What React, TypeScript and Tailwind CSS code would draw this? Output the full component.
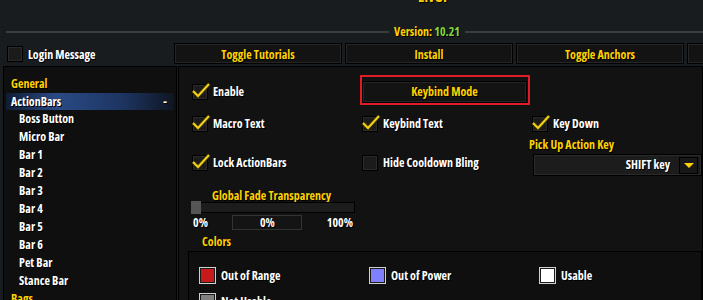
import React from 'react';

const GOLD = 'text-[#ffd100]';

function Check({ checked = false }: { checked?: boolean }) {
  return (
    <div className="relative w-[16px] h-[16px] shrink-0 border border-black bg-[#1b1b1b] shadow-[inset_0_0_0_1px_#2a2a2a]">
      {checked && (
        <svg className="absolute -left-[3px] -top-[4px]" width="22" height="20" viewBox="0 0 22 20">
          <path d="M3 10 L8 15 L19 3" fill="none" stroke="#3a3000" strokeWidth="4" strokeLinejoin="miter" />
          <path d="M3 10 L8 15 L19 3" fill="none" stroke="#f2d21a" strokeWidth="2" strokeLinejoin="miter" />
        </svg>
      )}
    </div>
  );
}

function CheckRow({ label, checked = false }: { label: string; checked?: boolean }) {
  return (
    <div className="flex items-center gap-[5px] w-[170px] shrink-0 whitespace-nowrap">
      <Check checked={checked} />
      <span className="text-white">{label}</span>
    </div>
  );
}

function Btn({ label, className = '' }: { label: string; className?: string }) {
  return (
    <div
      className={`flex items-center justify-center shrink-0 whitespace-nowrap border border-black bg-[#131313] shadow-[inset_0_0_0_1px_#252525] ${GOLD} ${className}`}
    >
      {label}
    </div>
  );
}

function Swatch({ color, label }: { color: string; label: string }) {
  return (
    <div className="flex items-center gap-[5px] w-[170px] shrink-0 whitespace-nowrap">
      <div className="w-[17px] h-[17px] border border-[#d0d0d0] p-px bg-[#1a1a1a]">
        <div className="w-full h-full" style={{ backgroundColor: color }} />
      </div>
      <span className="text-white">{label}</span>
    </div>
  );
}

const subItems = ['Boss Button', 'Micro Bar', 'Bar 1', 'Bar 2', 'Bar 3', 'Bar 4', 'Bar 5', 'Bar 6', 'Pet Bar', 'Stance Bar'];

export default function App() {
  return (
    <div className="flow-root w-[703px] h-[300px] overflow-hidden bg-[#181c1f] text-[12px] font-bold leading-none [font-family:'Open_Sans',sans-serif] [font-stretch:75%] [text-shadow:1px_1px_0_#000]">
      {/* title */}
      <div className="h-[25px] flow-root">
        <div className={`pl-[418px] -mt-[11px] text-[15px] ${GOLD}`}>ElvUI</div>
      </div>

      {/* version line */}
      <div className="flex items-center h-[13px] pl-[6px]">
        <div className="w-[383px] h-[2px] bg-[#3c3c3c]" />
        <div className="px-[5px] whitespace-nowrap">
          <span className={GOLD}>Version: </span>
          <span className="text-[#7fd83a]">10.21</span>
        </div>
        <div className="flex-1 h-[2px] bg-[#3c3c3c]" />
      </div>

      {/* top row */}
      <div className="flex items-center h-[21px] mt-[5px]">
        <div className="w-[174px] shrink-0 pl-[7px] flex items-center gap-[5px] whitespace-nowrap">
          <Check />
          <span className="text-white pt-[2px]">Login Message</span>
        </div>
        <div className="flex gap-[3px]">
          <Btn label="Toggle Tutorials" className="w-[168px] h-[21px] pt-[2px]" />
          <Btn label="Install" className="w-[168px] h-[21px] pt-[2px]" />
          <Btn label="Toggle Anchors" className="w-[168px] h-[21px] pt-[2px]" />
          <Btn label="" className="w-[168px] h-[21px]" />
        </div>
      </div>

      {/* body */}
      <div className="flex mt-[2px] h-[240px]">
        {/* left tree */}
        <div className="ml-[3px] w-[174px] shrink-0 border border-black bg-[#0f0f0f] pt-[11px] whitespace-nowrap">
          <div className={`pl-[7px] h-[15px] ${GOLD}`}>General</div>
          <div className="mx-[2px] h-[17px] flex items-center justify-between pl-[5px] pr-[7px] text-white bg-[linear-gradient(to_right,#0f1c33,#2a4a86_30%,#1d3460_70%,#0f1522)]">
            <span>ActionBars</span>
            <span>-</span>
          </div>
          {subItems.map((s) => (
            <div key={s} className="pl-[15px] h-[18px] flex items-center text-white">
              {s}
            </div>
          ))}
          <div className={`pl-[7px] h-[18px] flex items-center ${GOLD}`}>Bags</div>
        </div>

        {/* right panel */}
        <div className="ml-[1px] flex-1 min-w-0 overflow-hidden border border-black bg-[#121212] pl-[13px]">
          {/* row 1 */}
          <div className="flex items-center mt-[13px] h-[24px]">
            <CheckRow label="Enable" checked />
            <div className="relative">
              <Btn label="Keybind Mode" className="w-[165px] h-[22px]" />
              <div className="absolute -left-[2px] -top-[6px] w-[170px] h-[30px] border-2 border-[#e01c24]" />
            </div>
          </div>

          {/* row 2 */}
          <div className="flex items-center mt-[11px] h-[17px]">
            <CheckRow label="Macro Text" checked />
            <CheckRow label="Keybind Text" checked />
            <CheckRow label="Key Down" checked />
          </div>

          {/* row 3 */}
          <div className="flex mt-[6px] h-[40px]">
            <div className="flex items-end pb-[7px]">
              <CheckRow label="Lock ActionBars" checked />
              <CheckRow label="Hide Cooldown Bling" />
            </div>
            <div className="-ml-[3px] mt-[1px] whitespace-nowrap">
              <div className={`h-[15px] ${GOLD}`}>Pick Up Action Key</div>
              <div className="ml-[4px] w-[169px] h-[22px] border border-black bg-[#1c1c1c] shadow-[inset_0_0_0_1px_#2a2a2a] flex items-center justify-end gap-[9px] pr-[3px] text-white">
                <span>SHIFT key</span>
                <div className="w-[19px] h-[17px] border border-black bg-[#181818] flex items-center justify-center">
                  <svg width="10" height="5" viewBox="0 0 10 5">
                    <path d="M0 0 H10 L5 5 Z" fill="#ffd100" />
                  </svg>
                </div>
              </div>
            </div>
          </div>

          {/* slider */}
          <div className="w-[164px] -ml-[1px] mt-[12px] whitespace-nowrap">
            <div className={`pl-[21px] h-[12px] ${GOLD}`}>Global Fade Transparency</div>
            <div className="h-[11px] border border-black bg-[#1c1c1c] relative">
              <div className="absolute -left-px -top-[2px] w-[10px] h-[13px] bg-[#555]" />
            </div>
            <div className="flex items-start justify-between px-[2px] mt-[2px] text-white">
              <span className="mt-[2px]">0%</span>
              <div className="w-[70px] h-[15px] border border-[#333] bg-[#141414] flex items-center justify-center">0%</div>
              <span className="mt-[2px]">100%</span>
            </div>
          </div>

          {/* colors */}
          <div className={`pl-[10px] mt-[6px] h-[14px] ${GOLD}`}>Colors</div>
          <div className="-ml-[4px] mt-[1px] border border-black bg-[#0f0f0f] h-[60px] pl-[10px] pt-[15px]">
            <div className="flex items-center">
              <Swatch color="#c81a1a" label="Out of Range" />
              <Swatch color="#8080ff" label="Out of Power" />
              <Swatch color="#ffffff" label="Usable" />
            </div>
            <div className="flex items-center mt-[9px]">
              <Swatch color="#808080" label="Not Usable" />
            </div>
          </div>
        </div>
      </div>
    </div>
  );
}
